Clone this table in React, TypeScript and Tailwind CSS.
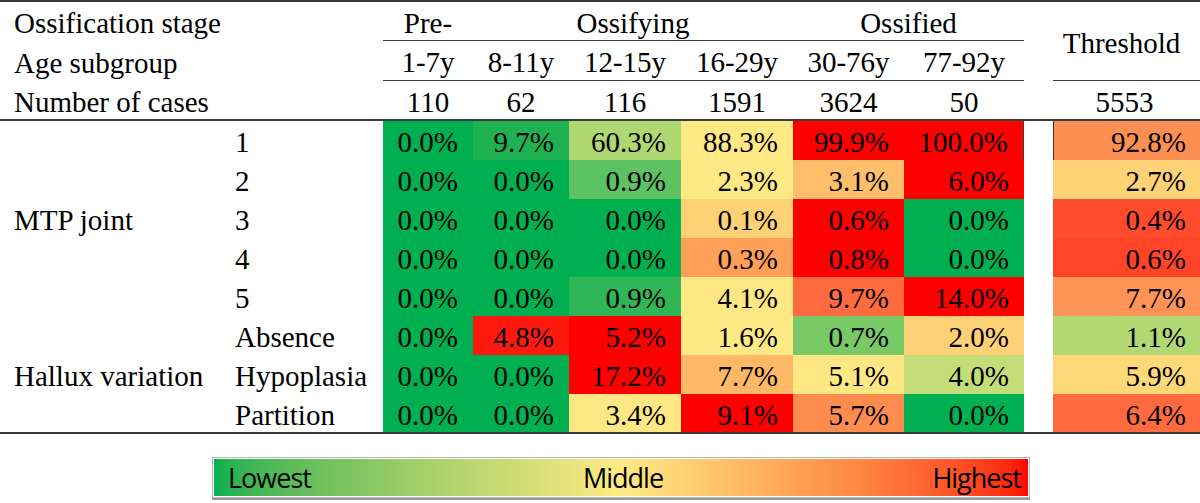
type Row = { group?: string; span?: number; label: string; cells: [string, string][]; threshold: [string, string] };

const G = '#00b050';
const R = '#ff0000';

const rows: Row[] = [
  {
    group: 'MTP joint',
    span: 5,
    label: '1',
    cells: [['0.0%', G], ['9.7%', '#1eb253'], ['60.3%', '#b0d872'], ['88.3%', '#ffe984'], ['99.9%', R], ['100.0%', R]],
    threshold: ['92.8%', '#fe8f52'],
  },
  {
    label: '2',
    cells: [['0.0%', G], ['0.0%', G], ['0.9%', '#5dc262'], ['2.3%', '#ffe984'], ['3.1%', '#ffbf6a'], ['6.0%', R]],
    threshold: ['2.7%', '#ffd276'],
  },
  {
    label: '3',
    cells: [['0.0%', G], ['0.0%', G], ['0.0%', G], ['0.1%', '#ffd175'], ['0.6%', R], ['0.0%', G]],
    threshold: ['0.4%', '#ff4b2b'],
  },
  {
    label: '4',
    cells: [['0.0%', G], ['0.0%', G], ['0.0%', G], ['0.3%', '#ff9f58'], ['0.8%', R], ['0.0%', G]],
    threshold: ['0.6%', '#ff4427'],
  },
  {
    label: '5',
    cells: [['0.0%', G], ['0.0%', G], ['0.9%', '#30b657'], ['4.1%', '#ffe783'], ['9.7%', '#ff6a3e'], ['14.0%', R]],
    threshold: ['7.7%', '#ff9456'],
  },
  {
    group: 'Hallux variation',
    span: 3,
    label: 'Absence',
    cells: [['0.0%', G], ['4.8%', '#ff1810'], ['5.2%', R], ['1.6%', '#ffe984'], ['0.7%', '#79c966'], ['2.0%', '#ffd176']],
    threshold: ['1.1%', '#b1d872'],
  },
  {
    label: 'Hypoplasia',
    cells: [['0.0%', G], ['0.0%', G], ['17.2%', R], ['7.7%', '#ffb865'], ['5.1%', '#ffe783'], ['4.0%', '#c5dd79']],
    threshold: ['5.9%', '#ffd978'],
  },
  {
    label: 'Partition',
    cells: [['0.0%', G], ['0.0%', G], ['3.4%', '#ffe884'], ['9.1%', R], ['5.7%', '#ff8c4f'], ['0.0%', G]],
    threshold: ['6.4%', '#ff6b3e'],
  },
];

const cols = 'grid grid-cols-[200px_183px_90px_96px_112px_112px_111px_120px_29px_147px]';
const ageCols = ['col-start-3', 'col-start-4', 'col-start-5', 'col-start-6', 'col-start-7', 'col-start-8'];

export default function App() {
  return (
    <div className="w-[1200px] h-[503px] bg-white text-black overflow-hidden">
      <div className="border-y-2 border-[#3c3c3c] font-['Liberation_Serif','Times_New_Roman',serif]">
        {/* header */}
        <div className={`${cols} grid-rows-[39px_40px_38px] text-[29px] leading-none border-b-2 border-[#3c3c3c]`}>
          <div className="col-start-1 col-span-2 flex items-center pl-[14px] pt-[4px]">Ossification stage</div>
          <div className="col-start-3 flex items-center justify-center pt-[4px] border-b border-[#3c3c3c]">Pre-</div>
          <div className="col-start-4 col-span-3 flex items-center justify-center pt-[4px] border-b border-[#3c3c3c]">Ossifying</div>
          <div className="col-start-7 col-span-2 flex items-center justify-center pt-[4px] border-b border-[#3c3c3c]">Ossified</div>
          <div className="col-start-10 row-start-1 row-span-2 flex items-center justify-center pr-[10px] pt-[4px] border-b border-[#3c3c3c]">Threshold</div>

          <div className="row-start-2 col-start-1 col-span-2 flex items-center pl-[14px] pt-[4px]">Age subgroup</div>
          {['1-7y', '8-11y', '12-15y', '16-29y', '30-76y', '77-92y'].map((a, i) => (
            <div key={a} className={`row-start-2 flex items-center justify-center pt-[4px] border-b border-[#3c3c3c] ${ageCols[i]}`}>
              {a}
            </div>
          ))}

          <div className="row-start-3 col-start-1 col-span-2 flex items-center pl-[14px] pt-[4px]">Number of cases</div>
          {['110', '62', '116', '1591', '3624', '50'].map((n, i) => (
            <div key={i} className={`row-start-3 flex items-center justify-center pt-[4px] ${ageCols[i]}`}>
              {n}
            </div>
          ))}
          <div className="row-start-3 col-start-10 flex items-center justify-center pr-[4px] pt-[4px]">5553</div>
        </div>

        {/* body */}
        <div className={`${cols} grid-rows-[39px_39px_39px_39px_39px_39px_39px_38px] text-[29px] leading-none`}>
          {rows.map((r, ri) => (
            <div key={ri} className="contents">
              {r.group && (
                <div className={`col-start-1 flex items-center whitespace-nowrap pl-[14px] pt-[4px] ${r.span === 5 ? 'row-span-5' : 'row-span-3'}`}>
                  {r.group}
                </div>
              )}
              <div className="col-start-2 flex items-center whitespace-nowrap pl-[35px] pt-[4px]">{r.label}</div>
              {r.cells.map(([v, c], ci) => (
                <div
                  key={ci}
                  className={`flex items-center justify-end pr-[15px] pt-[4px] ${ri === 0 && ci === 5 ? 'border-r border-[#3c3c3c]' : ''}`}
                  style={{ backgroundColor: c }}
                >
                  {v}
                </div>
              ))}
              <div />
              <div
                className={`flex items-center justify-end pr-[14px] pt-[4px] ${ri === 0 ? 'border-l border-[#3c3c3c]' : ''}`}
                style={{ backgroundColor: r.threshold[1] }}
              >
                {r.threshold[0]}
              </div>
            </div>
          ))}
        </div>
      </div>

      {/* legend */}
      <div className="mt-[23px] ml-[212px] w-[818px] h-[41px] border border-[#b5b5b5] shadow-[0_2px_0_#9a9a9a] p-[1px]">
        <div className="h-full bg-linear-to-r from-[#00b050] via-[#ffeb84] to-[#ff0000] grid grid-cols-[1fr_auto_1fr] items-center text-[27px] leading-none font-['Open_Sans','Noto_Sans',sans-serif]">
          <span className="justify-self-start pl-[14px] tracking-[-1px]">Lowest</span>
          <span className="ml-[4px] tracking-[-1px]">Middle</span>
          <span className="justify-self-end pr-[7px] tracking-[-1px]">Highest</span>
        </div>
      </div>
    </div>
  );
}
